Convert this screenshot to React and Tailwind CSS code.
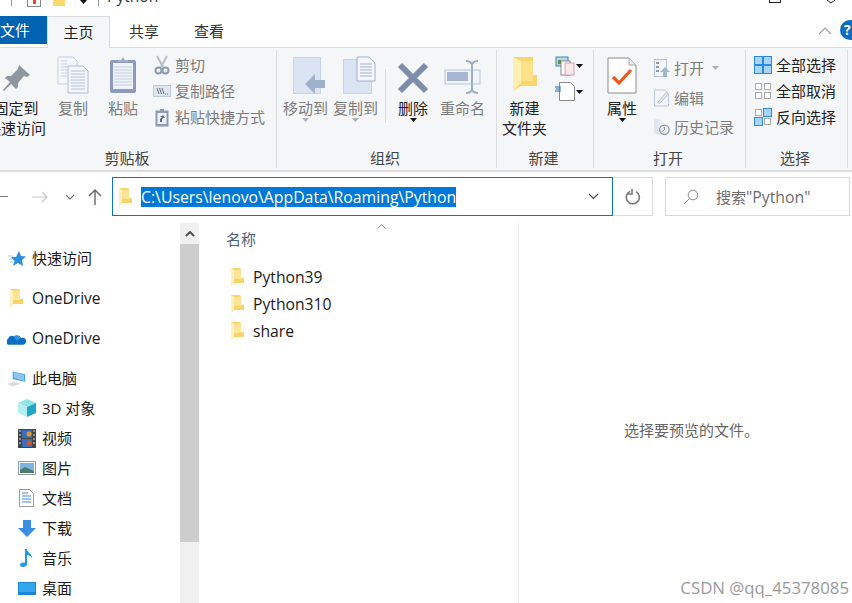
import React from "react";

const F = { fontFamily: '"Open Sans","Noto Sans CJK SC",sans-serif' };

function SmallFolder() {
  return (
    <svg width="13" height="18" viewBox="0 0 13 18">
      <path d="M0 0h8l2 1v9h3v5H3l-3 3z" fill="#f8d469" />
      <path d="M3 2h7v9H3z" fill="#fde596" />
      <path d="M0 0l3 2v12l-3 4z" fill="#fff1bf" />
    </svg>
  );
}

function Pin() {
  return (
    <svg width="30" height="30" viewBox="0 0 30 30">
      <path d="M18 1l11 10-3 2-3-1-6 7 0 4-2 2-5-5-7 7-1-1 7-8-5-4 2-2 4 0 7-7z" fill="#8e979f" />
    </svg>
  );
}
function Copy() {
  return (
    <svg width="32" height="38" viewBox="0 0 32 38">
      <path d="M1 1h15l4 4v23H1z" fill="#f4f6fb" stroke="#c4cfe3" />
      <path d="M11 10h15l5 5v22H11z" fill="#f4f6fb" stroke="#aebcd6" />
      {[15, 18, 21, 24, 27, 30, 33].map((y) => (
        <path key={y} d="M14 0h14" transform={`translate(0 ${y})`} stroke="#b4c1da" />
      ))}
      {[5, 8, 11, 14, 17, 20].map((y) => (
        <path key={y} d="M4 0h6" transform={`translate(0 ${y})`} stroke="#c8d3e6" />
      ))}
    </svg>
  );
}
function Paste() {
  return (
    <svg width="28" height="38" viewBox="0 0 28 38">
      <rect x="1" y="4" width="26" height="33" rx="2" fill="#8d9ab9" />
      <rect x="4" y="7" width="20" height="26" fill="#eef2f9" />
      {[11, 14, 17, 20, 23, 26, 29].map((y) => (
        <path key={y} d="M5 0h18" transform={`translate(0 ${y})`} stroke="#c5cfe2" />
      ))}
      <path d="M9 6h10V4h-3l-2-3-2 3H9z" fill="#a2adc6" />
    </svg>
  );
}
function Scissors() {
  return (
    <svg width="16" height="20" viewBox="0 0 16 20" fill="none">
      <path d="M3 1l6 11M13 1L7 12" stroke="#b6bdc7" strokeWidth="2" />
      <circle cx="4.5" cy="15.5" r="3" stroke="#8c9ab5" strokeWidth="2" />
      <circle cx="11.5" cy="15.5" r="3" stroke="#8c9ab5" strokeWidth="2" />
    </svg>
  );
}
function CopyPath() {
  return (
    <svg width="18" height="12" viewBox="0 0 18 12">
      <rect x="0.5" y="0.5" width="17" height="11" fill="#dfe6f2" stroke="#bcc8dc" />
      <path d="M4 3l2 6M6.5 3l2 6M9 3l2 6" stroke="#67707f" fill="none" />
      <path d="M12 9h1M14 9h1" stroke="#67707f" />
    </svg>
  );
}
function PasteLink() {
  return (
    <svg width="14" height="19" viewBox="0 0 14 19">
      <rect x="0.5" y="2.5" width="13" height="16" fill="#8d9ab9" />
      <rect x="2.5" y="5" width="9" height="11" fill="#eef2f9" />
      <path d="M5 1h4v2H5z" fill="#8d9ab9" />
      <path d="M5 14v-3l2-2h-2l3-2 2 3h-2l-1 1v3z" fill="#5b6d92" />
    </svg>
  );
}
function MoveTo() {
  return (
    <svg width="33" height="37" viewBox="0 0 33 37" className="ml-[8px]">
      <path d="M0.5 0.5h27v36H.5z" fill="#dbe4f2" stroke="#c7d3e6" />
      <path d="M12 27l10-10v6h10v8H22v6z" fill="#9fb0cb" />
    </svg>
  );
}
function CopyTo() {
  return (
    <svg width="33" height="38" viewBox="0 0 33 38" className="ml-[7px]">
      <path d="M0.5 3.5h28v34H.5z" fill="#dbe4f2" stroke="#c7d3e6" />
      <path d="M14 1h12l6 6v18H14z" fill="#f4f6fb" stroke="#9fb0cb" />
      {[8, 11, 14, 17, 20].map((y) => (
        <path key={y} d="M17 0h12" transform={`translate(0 ${y})`} stroke="#a4b1c9" />
      ))}
    </svg>
  );
}
function DeleteX() {
  return (
    <svg width="32" height="32" viewBox="0 0 32 32">
      <path d="M3 3l26 26M29 3L3 29" stroke="#7e8dab" strokeWidth="6" />
    </svg>
  );
}
function Rename() {
  return (
    <svg width="38" height="34" viewBox="0 0 38 34">
      <rect x="1" y="10" width="35" height="14" fill="#eff3fa" stroke="#b8c5dc" />
      <rect x="3" y="12" width="21" height="9" fill="#a6b6d1" />
      <path d="M22 1c3 0 5 1 6 3 1-2 3-3 6-3M22 33c3 0 5-1 6-3 1 2 3 3 6 3M28 4v26" stroke="#9fadc5" strokeWidth="2" fill="none" />
    </svg>
  );
}
function BigFolder() {
  return (
    <svg width="24" height="36" viewBox="0 0 24 36" className="mb-[1px]">
      <path d="M0 0h20v18h4v11H8l-8 5z" fill="#f9d56c" />
      <path d="M8 4h12v20H8z" fill="#fde08a" />
      <path d="M0 0l8 4v22l-8 8z" fill="#fff0b0" />
    </svg>
  );
}
function NewItem() {
  return (
    <svg width="20" height="20" viewBox="0 0 20 20">
      <rect x="1" y="1" width="12" height="9" fill="#bcd8ea" stroke="#3a87b8" />
      <rect x="6" y="5" width="9" height="14" fill="#fff" stroke="#888" />
      <rect x="10" y="7" width="9" height="12" fill="#fbe9ea" stroke="#a58" strokeWidth="0.5" />
      <path d="M3 4h3v4H3z" fill="#6b8e4e" />
    </svg>
  );
}
function EasyAccess() {
  return (
    <svg width="20" height="19" viewBox="0 0 20 19">
      <path d="M4.5 0.5h11l4 4v14h-15z" fill="#fff" stroke="#8a8a8a" />
      <path d="M0 5h6M1 7h5M0 9h6" stroke="#2a6fb0" />
    </svg>
  );
}
function Props() {
  return (
    <svg width="30" height="37" viewBox="0 0 30 37">
      <path d="M1 1h21l7 7v28H1z" fill="#fff" stroke="#8b8b8b" />
      <path d="M22 1v7h7" fill="#e8e8e8" stroke="#aaa" />
      <path d="M6 20l6 6 12-13" stroke="#f0591e" strokeWidth="3.2" fill="none" />
    </svg>
  );
}
function OpenIcon() {
  return (
    <svg width="16" height="19" viewBox="0 0 16 19">
      <rect x="0.5" y="0.5" width="12" height="17" fill="#f2f5fa" stroke="#b8c2d3" />
      <path d="M2 3h3v2H2zM2 7h3v2H2zM2 11h3v2H2z" fill="#8c99ad" />
      <path d="M11 8l5 5h-3v5H9v-5H6z" fill="#a4b4cc" />
    </svg>
  );
}
function EditIcon() {
  return (
    <svg width="16" height="18" viewBox="0 0 17 18">
      <path d="M0.5 0.5h11l4 4v13h-15z" fill="#f2f5fa" stroke="#b8c5dc" />
      <path d="M4 14L13 3l2 2L6 15z" fill="#dfe5ef" stroke="#a9b5c9" strokeWidth="0.7" />
    </svg>
  );
}
function HistoryIcon() {
  return (
    <svg width="16" height="18" viewBox="0 0 17 18">
      <path d="M0 1h6v16H2l-2-2z" fill="#dde4ee" />
      <path d="M4 3h6v6H4z" fill="#e8edf4" />
      <circle cx="11" cy="12" r="5" fill="#eef1f5" stroke="#8e98a6" strokeWidth="1.4" />
      <path d="M11 9v3l-2 1.5" stroke="#7b8492" fill="none" />
    </svg>
  );
}
function SelAll() {
  return (
    <svg width="18" height="18" viewBox="0 0 18 18">
      <rect x="0.5" y="0.5" width="17" height="17" fill="#a9d4f7" stroke="#2a8bdc" />
      <path d="M9 0v18M0 9h18" stroke="#2a8bdc" strokeWidth="2" />
    </svg>
  );
}
function SelNone() {
  return (
    <svg width="18" height="18" viewBox="0 0 18 18" fill="#fff" stroke="#ababab">
      <rect x="1.5" y="1.5" width="6" height="6" />
      <rect x="10.5" y="1.5" width="6" height="6" />
      <rect x="1.5" y="10.5" width="6" height="6" />
      <rect x="10.5" y="10.5" width="6" height="6" />
    </svg>
  );
}
function SelInv() {
  return (
    <svg width="18" height="18" viewBox="0 0 18 18">
      <rect x="1.5" y="1.5" width="6" height="6" fill="#fff" stroke="#ababab" />
      <rect x="9.5" y="0.5" width="8" height="8" fill="#a9d4f7" stroke="#2a8bdc" />
      <rect x="0.5" y="9.5" width="8" height="8" fill="#a9d4f7" stroke="#2a8bdc" />
      <rect x="10.5" y="10.5" width="6" height="6" fill="#fff" stroke="#ababab" />
    </svg>
  );
}
function Caret({ gray }) {
  return (
    <svg width="7" height="4" viewBox="0 0 7 4" className="block">
      <path d="M0 0h7L3.5 4z" fill={gray ? "#b0b0b0" : "#111"} />
    </svg>
  );
}

function Big({ icon, lines, dim, caret, w }) {
  return (
    <div className={`flex flex-col items-center shrink-0 ${w}`}>
      <div className="flex items-end justify-center h-[38px]">{icon}</div>
      <div className={`mt-[4px] text-[15px] leading-[20px] whitespace-nowrap text-center ${dim ? "text-[#7c7c7c]" : "text-[#222]"}`}>
        {lines.map((l) => (
          <div key={l}>{l}</div>
        ))}
      </div>
      {caret && <Caret gray={dim} />}
    </div>
  );
}
function Small({ icon, text, dim, h, caret, w }) {
  return (
    <div className={`flex items-center gap-[4px] ${h}`}>
      <div className={`${w} flex justify-center shrink-0`}>{icon}</div>
      <span className={`text-[15px] leading-[20px] whitespace-nowrap ${dim ? "text-[#7c7c7c]" : "text-[#222]"}`}>{text}</span>
      {caret && (
        <span className="ml-[4px]">
          <Caret gray />
        </span>
      )}
    </div>
  );
}
function Group({ w, label, children, labelClass = "pr-[3px]" }) {
  return (
    <div className={`${w} shrink-0 h-[118px] flex flex-col border-r border-[#dcdcdc]`}>
      <div className="flex-1 flex items-start pt-[6px]">{children}</div>
      <div className={`text-[15px] leading-[20px] text-[#444] text-center ${labelClass}`}>{label}</div>
    </div>
  );
}

function Nav({ icon, text, indent, latin }) {
  return (
    <div className={`h-[30px] flex items-center shrink-0 gap-[6px] ${indent ? "pl-[17px]" : "pl-[7px]"}`}>
      <div className="w-[19px] flex justify-center">{icon}</div>
      <span className={`${latin ? "text-[15.6px]" : "text-[15px]"} leading-[20px] text-[#1a1a1a] whitespace-nowrap`}>{text}</span>
    </div>
  );
}

export default function App() {
  return (
    <div style={F} className="relative w-[852px] h-[603px] overflow-hidden bg-white flex flex-col">
      {/* title strip, clipped by the top edge */}
      <div className="h-[16px] shrink-0 overflow-hidden flex items-start pl-[11px]">
        <div className="w-px h-[6px] bg-[#999]" />
        <div className="ml-[15px] w-[14px] h-[7px] border-x border-b border-[#888] flex justify-center">
          <div className="w-[3px] h-[4px] bg-[#e04a2a]" />
        </div>
        <div className="ml-[12px] w-[12px] h-[6px] bg-[#fbd96f]" />
        <div className="ml-[15px]"><Caret /></div>
        <div className="ml-[11px] w-px h-[6px] bg-[#999]" />
        <div className="ml-[8px] -mt-[14px] text-[15.6px] leading-[20px] text-[#333]">Python</div>
        <div className="flex-1" />
        <div className="w-[12px] h-[3px] border-x border-b border-[#222] mr-[45px]" />
        <svg width="12" height="4" viewBox="0 0 12 4" className="mr-[14px]"><path d="M1 0l4 3 4-3" stroke="#222" fill="none" /></svg>
      </div>

      {/* tabs */}
      <div className="h-[31px] shrink-0 flex items-start relative">
        <div className="w-[47px] h-[28px] bg-[#0063b1] text-white text-[15px] leading-[28px] text-right pr-[20px] overflow-hidden whitespace-nowrap">文件</div>
        <div className="w-[63px] h-[32px] bg-[#f5f6f7] border-x border-t border-[#dcdcdc] text-[15px] leading-[30px] text-center text-[#222] z-10">主页</div>
        <div className="w-[68px] text-[15px] leading-[30px] text-center text-[#333]">共享</div>
        <div className="w-[62px] text-[15px] leading-[30px] text-center text-[#333]">查看</div>
        <div className="flex-1" />
        <svg width="14" height="8" viewBox="0 0 14 8" className="mt-[11px] mr-[8px]"><path d="M1 7l6-6 6 6" stroke="#a0a0a0" fill="none" strokeWidth="1.2" /></svg>
        <div className="w-[12px] h-[20px] mt-[4px] rounded-l-full bg-[#0f6cbd] text-white text-[14px] leading-[20px] pl-[4px] font-bold overflow-hidden">?</div>
      </div>

      {/* ribbon */}
      <div className="h-[125px] shrink-0 bg-[#f5f6f7] border-t border-b-2 border-[#dcdcdc] flex pt-[2px] overflow-hidden">
        <Group w="w-[277px]" label="剪贴板" labelClass="pr-[22px]">
          <Big w="w-[60px] -ml-[14px]" icon={<Pin />} lines={["固定到", "快速访问"]} />
          <Big w="w-[32px] ml-[11px]" dim icon={<Copy />} lines={["复制"]} />
          <Big w="w-[30px] ml-[19px]" dim icon={<Paste />} lines={["粘贴"]} />
          <div className="ml-[15px] -mt-[4px] flex flex-col">
            <Small h="h-[26px]" w="w-[18px]" dim icon={<Scissors />} text="剪切" />
            <Small h="h-[26px]" w="w-[18px]" dim icon={<CopyPath />} text="复制路径" />
            <Small h="h-[26px]" w="w-[18px]" dim icon={<PasteLink />} text="粘贴快捷方式" />
          </div>
        </Group>
        <Group w="w-[220px]" label="组织">
          <Big w="w-[45px] ml-[6px]" dim caret icon={<MoveTo />} lines={["移动到"]} />
          <Big w="w-[45px] ml-[5px]" dim caret icon={<CopyTo />} lines={["复制到"]} />
          <div className="w-px h-[54px] bg-[#dcdcdc] ml-[7px] mt-[13px]" />
          <Big w="w-[30px] ml-[12px]" caret icon={<DeleteX />} lines={["删除"]} />
          <Big w="w-[45px] ml-[12px]" dim icon={<Rename />} lines={["重命名"]} />
        </Group>
        <Group w="w-[97px]" label="新建">
          <Big w="w-[45px] ml-[5px]" icon={<BigFolder />} lines={["新建", "文件夹"]} />
          <div className="ml-[8px] flex flex-col gap-[6px]">
            <div className="flex items-center gap-[1px]"><NewItem /><Caret /></div>
            <div className="flex items-center gap-[1px]"><EasyAccess /><Caret /></div>
          </div>
        </Group>
        <Group w="w-[152px]" label="打开">
          <Big w="w-[30px] ml-[13px]" caret icon={<Props />} lines={["属性"]} />
          <div className="ml-[17px] -mt-[3px] flex flex-col">
            <Small h="h-[30px]" w="w-[16px]" dim caret icon={<OpenIcon />} text="打开" />
            <Small h="h-[29px]" w="w-[16px]" dim icon={<EditIcon />} text="编辑" />
            <Small h="h-[30px]" w="w-[16px]" dim icon={<HistoryIcon />} text="历史记录" />
          </div>
        </Group>
        <Group w="w-[102px]" label="选择">
          <div className="ml-[8px] -mt-[4px] flex flex-col">
            <Small h="h-[26px]" w="w-[18px]" icon={<SelAll />} text="全部选择" />
            <Small h="h-[26px]" w="w-[18px]" icon={<SelNone />} text="全部取消" />
            <Small h="h-[26px]" w="w-[18px]" icon={<SelInv />} text="反向选择" />
          </div>
        </Group>
      </div>

      {/* address row */}
      <div className="h-[44px] shrink-0 flex items-end">
        <div className="w-[112px] h-[39px] flex items-center">
          <div className="w-[8px] h-[1px] bg-[#777]" />
          <svg width="16" height="12" viewBox="0 0 16 12" className="ml-[24px]"><path d="M0 6h15M10 1l5 5-5 5" stroke="#c8c8c8" strokeWidth="1.2" fill="none" /></svg>
          <svg width="10" height="6" viewBox="0 0 10 6" className="ml-[17px]"><path d="M1 1l4 4 4-4" stroke="#777" strokeWidth="1.2" fill="none" /></svg>
          <svg width="14" height="16" viewBox="0 0 14 16" className="ml-[13px]"><path d="M7 16V1M1 7l6-6 6 6" stroke="#6f6f6f" strokeWidth="1.5" fill="none" /></svg>
        </div>
        <div className="w-[501px] h-[39px] border border-[#0a74cc] flex items-center pl-[6px] shrink-0">
          <SmallFolder />
          <span className="ml-[9px] bg-[#0078d7] text-white text-[15.8px] leading-[20px] whitespace-nowrap">C:\Users\lenovo\AppData\Roaming\Python</span>
          <div className="flex-1" />
          <svg width="11" height="7" viewBox="0 0 11 7" className="mr-[13px]"><path d="M1 1l4.5 4.5L10 1" stroke="#444" strokeWidth="1.1" fill="none" /></svg>
        </div>
        <div className="w-[40px] h-[39px] border-y border-r border-[#d9d9d9] flex items-center justify-center shrink-0">
          <svg width="16" height="16" viewBox="0 0 16 16"><path d="M11 2.6A6.5 6.5 0 1 1 5 2.4M7 0v5H2.6" stroke="#777" strokeWidth="1.6" fill="none" /></svg>
        </div>
        <div className="ml-[12px] w-[185px] h-[39px] border border-[#d9d9d9] flex items-center pl-[17px] shrink-0">
          <svg width="16" height="16" viewBox="0 0 16 16"><circle cx="10" cy="6" r="4.8" stroke="#8a8a8a" fill="none" /><path d="M6.5 9.5L1 15" stroke="#a87c5a" /></svg>
          <span className="ml-[17px] text-[15px] leading-[20px] text-[#6d6d6d] whitespace-nowrap">搜索<span className="text-[15.8px]">"Python"</span></span>
        </div>
      </div>

      {/* body */}
      <div className="flex-1 min-h-0 flex">
        <div className="w-[180px] shrink-0 flex flex-col pt-[27px] overflow-hidden">
          <Nav text="快速访问" icon={
            <svg width="18" height="17" viewBox="0 0 18 17"><path d="M11 1l2 5 5 .5-4 3.5 1 6-5-3-5 3 1.5-5L3 7h5z" fill="#2a8fe0" /><path d="M0 6h5M1 9h3M2 12h3" stroke="#9ccbf0" /></svg>
          } />
          <div className="h-[10px] shrink-0" />
          <Nav latin text="OneDrive" icon={<SmallFolder />} />
          <div className="h-[10px] shrink-0" />
          <Nav latin text="OneDrive" icon={
            <svg width="20" height="13" viewBox="0 0 20 13"><path d="M1 13a3.5 3.5 0 0 1 0-6 5 5 0 0 1 6-3 6 6 0 0 1 8 2 3.5 3.5 0 0 1 5 3.5c0 2-1 3.5-3 3.5z" fill="#0f6cc0" /><path d="M7 4a6 6 0 0 1 8 2l-5 3z" fill="#2b94dc" /></svg>
          } />
          <div className="h-[10px] shrink-0" />
          <Nav text="此电脑" icon={
            <svg width="20" height="17" viewBox="0 0 20 17"><path d="M6 1l13 3v8L6 9z" fill="#3f9be0" /><path d="M7 2l11 2.5v6.5L7 8z" fill="#8cc6f0" /><path d="M0 14l8-2 6 2-8 3z" fill="#d8dde2" /></svg>
          } />
          <Nav indent text="3D 对象" icon={
            <svg width="18" height="18" viewBox="0 0 18 18"><path d="M9 0l9 4-9 4-9-4z" fill="#8fe4ea" /><path d="M0 4l9 4v10l-9-4z" fill="#b5edf0" /><path d="M18 4L9 8v10l9-4z" fill="#1fa5c8" /></svg>
          } />
          <Nav indent text="视频" icon={
            <svg width="18" height="19" viewBox="0 0 18 19"><rect width="18" height="19" fill="#444" /><rect x="4" y="1" width="10" height="8" fill="#3a6fc0" /><rect x="4" y="10" width="10" height="8" fill="#3a6fc0" /><circle cx="11" cy="5" r="2.5" fill="#e09a2a" /><circle cx="11" cy="14" r="2.5" fill="#d0562a" /><path d="M1 2h2M1 6h2M1 10h2M1 14h2M15 2h2M15 6h2M15 10h2M15 14h2" stroke="#ddd" /></svg>
          } />
          <Nav indent text="图片" icon={
            <svg width="18" height="14" viewBox="0 0 18 14"><rect x="0.5" y="0.5" width="17" height="13" fill="#fff" stroke="#9a9a9a" /><rect x="2" y="2" width="14" height="10" fill="#7fb3e0" /><path d="M2 9l5-3 9 4v2H2z" fill="#4b7f6f" /></svg>
          } />
          <Nav indent text="文档" icon={
            <svg width="15" height="18" viewBox="0 0 15 18"><path d="M0.5 0.5h10l4 4v13H.5z" fill="#fff" stroke="#9a9a9a" /><path d="M3 4h6M3 7h9M3 10h9M3 13h9" stroke="#3f8fd0" /></svg>
          } />
          <Nav indent text="下载" icon={
            <svg width="18" height="17" viewBox="0 0 18 17"><path d="M5 0h8v8h5l-9 9-9-9h5z" fill="#3a8fe0" /></svg>
          } />
          <Nav indent text="音乐" icon={
            <svg width="13" height="18" viewBox="0 0 13 18"><path d="M5 0h2c0 4 5 4 5 9-1-2-3-3-5-3v9c0 2-2 3-4 3s-3-1-3-2c0-2 3-3 5-2z" fill="#1c9bee" /></svg>
          } />
          <Nav indent text="桌面" icon={
            <svg width="18" height="13" viewBox="0 0 18 13"><rect width="18" height="13" fill="#1a86d8" /><rect x="1" y="1" width="16" height="9" fill="#35a6ee" /></svg>
          } />
        </div>
        <div className="w-[19px] shrink-0 mt-[7px] bg-[#f0f0f0] flex flex-col">
          <div className="h-[21px] flex items-center justify-center">
            <svg width="10" height="6" viewBox="0 0 10 6"><path d="M1 5l4-4 4 4" stroke="#505050" strokeWidth="2" fill="none" /></svg>
          </div>
          <div className="h-[298px] bg-[#cdcdcd]" />
        </div>
        <div className="w-[319px] shrink-0 relative flex flex-col">
          <div className="absolute left-[178px] top-[8px]">
            <svg width="9" height="5" viewBox="0 0 9 5" className="block"><path d="M0.5 4.5l4-4 4 4" stroke="#8a8a8a" fill="none" /></svg>
          </div>
          <div className="pl-[27px] pt-[13px] text-[15px] leading-[20px] text-[#4c607a]">名称</div>
          <div className="pt-[14px] pl-[32px] flex flex-col">
            {["Python39", "Python310", "share"].map((n) => (
              <div key={n} className="h-[27px] flex items-center gap-[9px]">
                <SmallFolder />
                <span className="text-[15.7px] leading-[20px] text-[#1a1a1a]">{n}</span>
              </div>
            ))}
          </div>
        </div>
        <div className="flex-1 mt-[7px] border-l border-[#f0f0f0] flex flex-col pt-[197px] pl-[105px]">
          <span className="text-[15px] leading-[20px] text-[#666] whitespace-nowrap">选择要预览的文件。</span>
        </div>
      </div>

      <div className="absolute right-[3px] bottom-[5px] text-[16.8px] leading-[20px] text-[#9a9a9a] whitespace-nowrap">CSDN @qq_45378085</div>
    </div>
  );
}
